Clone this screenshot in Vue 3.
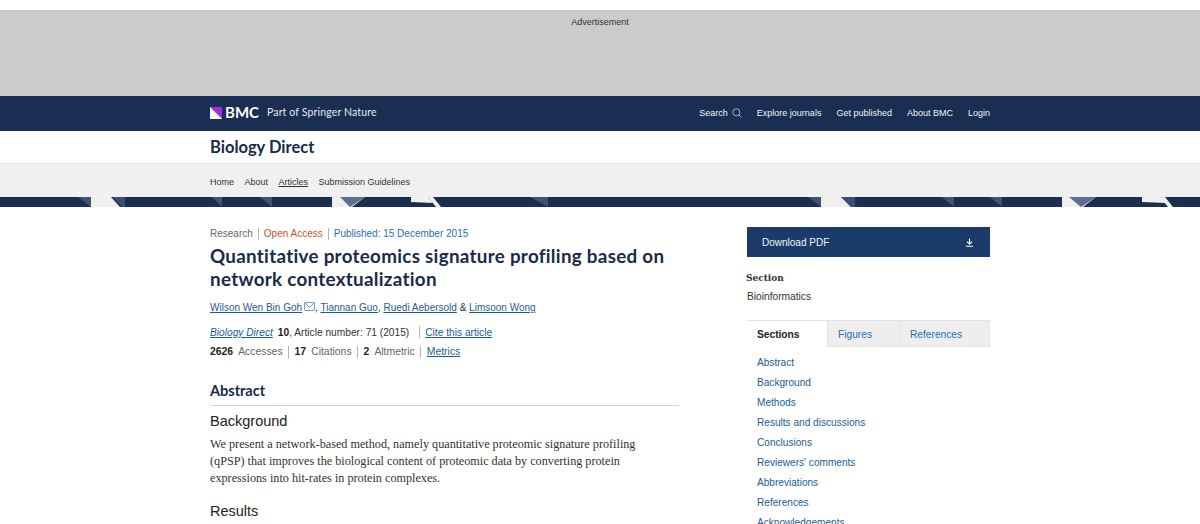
<script setup>
const nav = ['Explore journals', 'Get published', 'About BMC', 'Login']
const sections = ['Abstract', 'Background', 'Methods', 'Results and discussions', 'Conclusions', "Reviewers' comments", 'Abbreviations', 'References', 'Acknowledgements']
const lightTris = ['78,0 91,0 91,10', '212,0 222,0 222,10', '260,0 272,0 272,10', '530,0 548,0 548,10', '942,0 954,0 954,10', '990,0 1002,0 1002,10', '808,0 821,0 821,10']
</script>

<template>
  <div class="page">
    <div class="ad">Advertisement</div>
    <header class="topbar">
      <div class="wrap topbar-in">
        <div class="brand">
          <svg class="logo" viewBox="0 0 12 12" width="12" height="12" aria-hidden="true">
            <rect width="12" height="12" fill="#a32ee0" />
            <polygon points="0,0 12,12 0,12" fill="#fff" />
          </svg>
          <span class="bmc">BMC</span>
          <span class="part">Part of Springer Nature</span>
        </div>
        <nav class="topnav">
          <span class="search">Search
            <svg viewBox="0 0 12 12" width="10" height="10" fill="none" stroke="#d5dbe5" stroke-width="0.9" aria-hidden="true">
              <circle cx="5.2" cy="5.2" r="4.3" />
              <path d="M8.3 8.3 11.4 11.4" />
            </svg>
          </span>
          <span v-for="n in nav" :key="n">{{ n }}</span>
        </nav>
      </div>
    </header>
    <div class="journal"><div class="wrap">Biology Direct</div></div>
    <div class="subnav">
      <div class="wrap subnav-in">
        <span>Home</span><span>About</span><span class="u">Articles</span><span>Submission Guidelines</span>
      </div>
    </div>
    <svg class="band" viewBox="0 0 1200 10" width="1200" height="10" preserveAspectRatio="none" aria-hidden="true">
      <rect width="1200" height="10" fill="#1a2e50" />
      <polygon v-for="t in lightTris" :key="t" :points="t" fill="#3e5273" />
      <polygon points="91,0 111,0 120,10 91,10" fill="#efefed" />
      <polygon points="113,0 125,0 125,10 122,10" fill="#3a4f72" />
      <polygon points="332,0 365,0 365,10 332,10" fill="#efefed" />
      <polygon points="340,0 365,0 350,10" fill="#5d6e8e" />
      <polygon points="365,0 365,10 352,10" fill="#1a2e50" />
      <polygon points="411,0 428,0 433,6 411,5" fill="#efefed" />
      <polygon points="433,0 435,0 435,10 440,10" fill="#1a2e50" />
      <polygon points="428,0 433,0 441,10 436,10" fill="#efefed" />
      <polygon points="821,0 841,0 851,10 821,10" fill="#efefed" />
      <polygon points="842,0 855,0 855,10 851,10" fill="#3a4f72" />
      <polygon points="1062,0 1096,0 1096,10 1062,10" fill="#efefed" />
      <polygon points="1069,0 1096,0 1081,10" fill="#5d6e8e" />
      <polygon points="1096,0 1096,10 1083,10" fill="#1a2e50" />
      <polygon points="1142,0 1160,0 1166,6 1142,5" fill="#efefed" />
      <polygon points="1160,0 1165,0 1173,10 1168,10" fill="#efefed" />
    </svg>

    <div class="wrap content">
      <main class="main">
        <div class="meta">
          <span class="grey">Research</span><i class="sep"></i><span class="orange">Open Access</span><i class="sep"></i><span class="blue">Published: 15 December 2015</span>
        </div>
        <h1>Quantitative proteomics signature profiling based on network contextualization</h1>
        <p class="authors">
          <a>Wilson Wen Bin Goh</a>
          <svg class="mail" viewBox="0 0 12 10" width="11" height="9" fill="none" stroke="#3b6ea5" stroke-width="0.8" aria-hidden="true">
            <rect x="0.5" y="0.5" width="11" height="9" rx="1" />
            <path d="M0.8 1 6 6 11.2 1" />
          </svg>, <a>Tiannan Guo</a>, <a>Ruedi Aebersold</a> &amp; <a>Limsoon Wong</a>
        </p>
        <p class="cite">
          <a class="it">Biology Direct</a><b>10</b>, Article number: 71 (2015)<i class="sep wide"></i><a>Cite this article</a>
        </p>
        <p class="stats">
          <b>2626</b><span class="grey">Accesses</span><i class="sep"></i><b>17</b><span class="grey">Citations</span><i class="sep"></i><b>2</b><span class="grey">Altmetric</span><i class="sep"></i><a>Metrics</a>
        </p>
        <h2>Abstract</h2>
        <h3>Background</h3>
        <p class="body">We present a network-based method, namely quantitative proteomic signature profiling (qPSP) that improves the biological content of proteomic data by converting protein expressions into hit-rates in protein complexes.</p>
        <h3 class="results">Results</h3>
      </main>
      <aside class="side">
        <div class="pdf">
          <span>Download PDF</span>
          <svg viewBox="0 0 10 10" width="9" height="9" fill="none" stroke="#fff" stroke-width="1.2" aria-hidden="true">
            <path d="M5 0.5V6.5M2.2 4 5 6.8 7.8 4M1 9.2H9" />
          </svg>
        </div>
        <div class="sec-label">Section</div>
        <div class="sec-val">Bioinformatics</div>
        <div class="tabs">
          <span class="tab on">Sections</span>
          <span class="tab t2">Figures</span>
          <span class="tab t3">References</span>
        </div>
        <ul class="toc">
          <li v-for="s in sections" :key="s">{{ s }}</li>
        </ul>
      </aside>
    </div>
  </div>
</template>

<style>
html, body { margin: 0; background: #fff; }
</style>

<style scoped>
.page {
  height: 524px;
  overflow: hidden;
  padding-top: 10px;
  box-sizing: border-box;
  background: #fff;
  font-family: "Liberation Sans", Arial, sans-serif;
  color: #333;
}
.wrap { width: 780px; margin: 0 auto; }
.ad {
  height: 86px;
  background: #cbcbcb;
  text-align: center;
  font-size: 9px;
  line-height: 10px;
  padding-top: 7px;
  box-sizing: border-box;
  color: #333;
}
.topbar { height: 35px; background: #1a2e53; color: #f2f4f7; }
.topbar-in { height: 100%; padding-bottom: 2px; box-sizing: border-box; display: flex; align-items: center; justify-content: space-between; }
.brand { display: flex; align-items: center; }
.logo { display: block; }
.bmc { font: 700 15px/1 Lato, sans-serif; color: #fff; margin-left: 3px; letter-spacing: 0; }
.part { font: 400 10.5px/1 Lato, sans-serif; margin-left: 8px; color: #e6e9ef; letter-spacing: 0.15px; }
.topnav { display: flex; gap: 15px; font-size: 9px; line-height: 12px; }
.search { display: flex; align-items: center; gap: 4px; }
.journal {
  height: 33px;
  box-sizing: border-box;
  border-bottom: 1px solid #e3e3e3;
  font: 700 16.5px/33px Lato, sans-serif;
  color: #1a2a4a;
}
.subnav { height: 33px; background: #f0f0f0; font-size: 9px; }
.subnav-in { display: flex; gap: 10.5px; line-height: 36px; color: #333; }
.u { text-decoration: underline; }
.band { display: block; }
.content { display: flex; justify-content: space-between; }
.main { width: 469px; }
.grey { color: #666; }
.orange { color: #c9541a; }
.blue { color: #1f6fb5; }
.meta { display: flex; align-items: center; font-size: 10px; line-height: 14px; margin-top: 20px; }
.sep { display: inline-block; width: 1px; height: 12px; background: #b5b5b5; margin: 0 5px; }
.sep.wide { margin: 0 5px 0 10px; vertical-align: -2px; }
h1 {
  margin: 3px 0 0;
  font: 700 18.8px/23px Lato, sans-serif;
  color: #1a2a4a;
  letter-spacing: 0.3px;
}
p { margin: 0; }
a { color: #1d5c92; text-decoration: underline; }
.authors { font-size: 10px; line-height: 14px; margin-top: 11px; color: #333; }
.mail { margin-left: 2px; vertical-align: 0; }
.cite { font-size: 10.2px; line-height: 14px; margin-top: 11px; color: #333; }
.it { font-style: italic; margin-right: 5px; }
.cite b { color: #222; }
.stats { display: flex; align-items: center; font-size: 10.4px; line-height: 14px; margin-top: 5px; }
.stats b { margin-right: 5px; color: #222; }
.stats .sep { margin: 0 5.5px; }
h2 {
  margin: 22px 0 0;
  font: 700 14.5px/20px Lato, sans-serif;
  color: #1a2a4a;
  padding-bottom: 4px;
  border-bottom: 1px solid #d5d5d5;
}
h3 {
  margin: 5px 0 0;
  font-weight: 400;
  font-size: 14.5px;
  line-height: 20px;
  color: #222;
}
.body {
  margin-top: 5px;
  font-family: "Liberation Serif", serif;
  font-size: 12.2px;
  line-height: 17px;
  color: #333;
  width: 445px;
}
.results { margin-top: 14px; }
.side { width: 243px; padding-top: 20px; }
.pdf {
  height: 30px;
  background: #1b3c68;
  color: #f2f4f7;
  font-size: 10px;
  display: flex;
  align-items: center;
  justify-content: space-between;
  padding: 0 16px 0 15px;
  box-sizing: border-box;
}
.sec-label { font: 700 9px/12px "DejaVu Serif", serif; margin-top: 15px; margin-left: -1px; color: #333; }
.sec-val { font-size: 10.2px; line-height: 14px; margin-top: 6px; color: #333; }
.tabs { display: flex; height: 27px; margin-top: 16px; font-size: 10.2px; line-height: 27px; }
.tab { box-sizing: border-box; padding-left: 10px; background: #eee; color: #1f6fb5; border: 1px solid #e2e2e2; border-left: 0; }
.tab.on { width: 81px; background: #fff; color: #222; font-weight: 700; border-bottom: 0; border-left: 0; }
.t2 { width: 72px; }
.t3 { width: 90px; }
.toc { list-style: none; margin: 6px 0 0; padding: 0 0 0 10px; font-size: 10.1px; line-height: 20px; color: #1d5c92; }
</style>
